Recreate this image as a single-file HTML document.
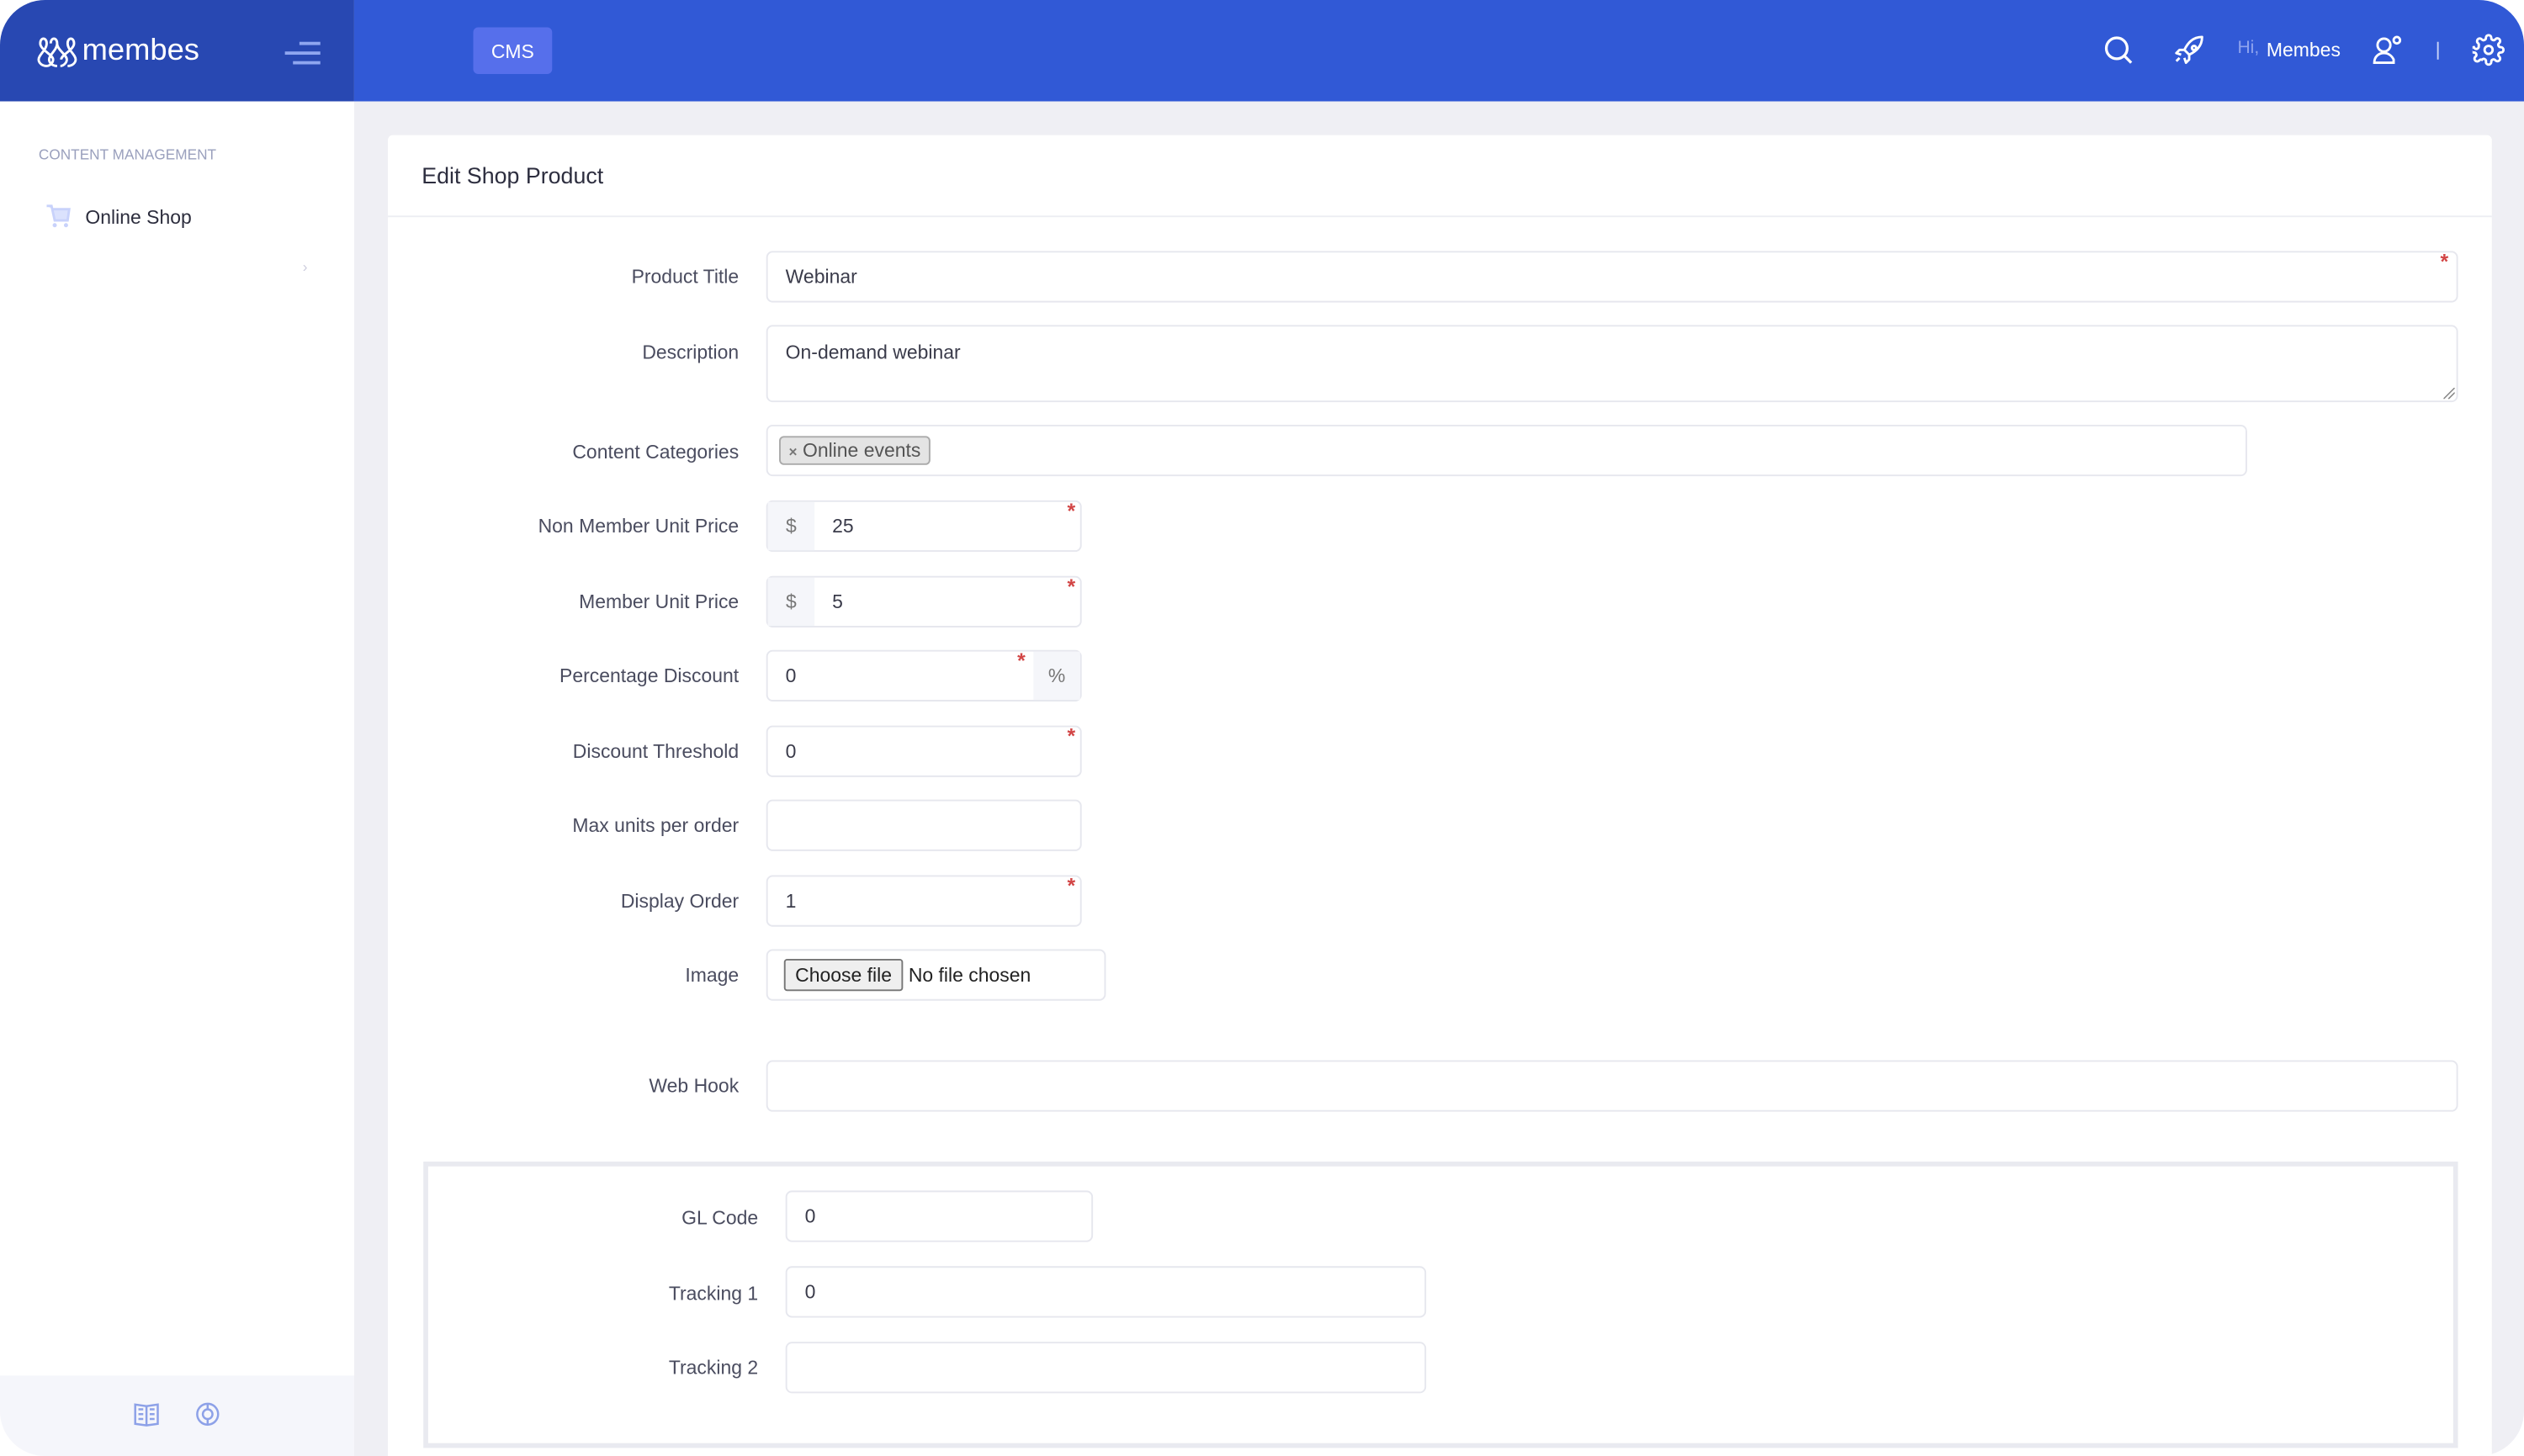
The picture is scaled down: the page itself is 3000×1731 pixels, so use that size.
<!DOCTYPE html>
<html><head><meta charset="utf-8"><style>
*{box-sizing:border-box;margin:0;padding:0}
html,body{width:3000px;height:1731px;overflow:hidden;background:#fff;font-family:"Liberation Sans",sans-serif}
#s{position:absolute;left:0;top:0;width:1568px;height:905px;transform:scale(1.91327,1.91271);transform-origin:0 0;border-radius:28px;overflow:hidden;background:#efeff4}
.a{position:absolute}
.hl{left:0;top:0;width:220px;height:63px;background:#2848b2}
.hr{left:220px;top:0;width:1348px;height:63px;background:#3159d6}
.lab{position:absolute;right:1109px;font-size:12px;color:#4a4c5f;text-align:right;white-space:nowrap}
.in{position:absolute;background:#fff;border:1px solid #e6e7ee;border-radius:4px;font-size:12px;color:#3a3b4a;padding-left:11px;display:flex;align-items:center}
.ad{position:absolute;top:0;bottom:0;background:#f5f6fa;color:#777;display:flex;align-items:center;justify-content:center;width:29px}
.st{position:absolute;color:#d24545;font-size:13px;font-weight:bold}
</style></head><body><div id="s">
<div class="a hl"></div><div class="a hr"></div>
<div class="a" style="left:22px;top:21px;color:#fff;font-size:19px;display:flex;align-items:center">
<svg width="27" height="20" viewBox="0 0 27 20" fill="none" stroke="#fff" stroke-width="1.5"><path d="M7 19c-3 0-5-2-5-4 0-3 5-6 5-10 0-2-1-3-2-3S3 3 3 5c0 4 8 7 8 10 0 2-2 4-4 4zM13.5 19c-3 0-5-2-5-4 0-3 5-6 5-10 0-2-1-3-2-3s-2 1-2 3M13.5 5c0 4 6 7 6 10 0 2-2 4-4 4M20 19c3 0 5-2 5-4 0-3-5-6-5-10 0-2 1-3 2-3s2 1 2 3c0 4-8 7-8 10"/></svg><span style="margin-left:2px">membes</span></div>
<div class="a" style="top:26px;height:2px;background:#8fa6f0;left:186px;width:13px"></div>
<div class="a" style="left:177px;top:32px;width:22px;height:2px;background:#8fa6f0"></div>
<div class="a" style="left:182px;top:38px;width:17px;height:2px;background:#8fa6f0"></div>
<div class="a" style="left:294px;top:17px;width:49px;height:29px;background:#566feb;border-radius:3px;color:#fff;font-size:12px;display:flex;align-items:center;justify-content:center">CMS</div>
<svg class="a" style="left:1306px;top:21px" width="20" height="20" viewBox="0 0 20 20" fill="none" stroke="#fff" stroke-width="1.7"><circle cx="9" cy="9" r="6.5"/><path d="M14 14l4 4"/></svg>
<svg class="a" style="left:1350px;top:21px" width="20" height="20" viewBox="0 0 20 20" fill="none" stroke="#fff" stroke-width="1.5" stroke-linejoin="round"><path d="M18 2c-6 0-9 4-11 8l3 3c4-2 8-5 8-11zM7 10H4l-2 2 3 1M10 13v3l-2 2-1-3M13 7.5a1.3 1.3 0 1 0 .01 0M4 15l-2 2"/></svg>
<div class="a" style="left:1390px;top:24px;font-size:11px;color:#8ea3ee">Hi,</div>
<div class="a" style="left:1408px;top:24px;font-size:12px;color:#fff">Membes</div>
<svg class="a" style="left:1473px;top:21px" width="22" height="20" viewBox="0 0 22 20" fill="none" stroke="#fff" stroke-width="1.5"><circle cx="8" cy="7" r="4"/><path d="M2 18c0-4 3-6 6-6s5 2 6 4v2H2z"/><circle cx="16" cy="4" r="2"/></svg>
<div class="a" style="left:1514px;top:26px;width:1px;height:11px;background:#c9d3f7"></div>
<svg class="a" style="left:1536px;top:21px" width="20" height="20" viewBox="0 0 24 24" fill="none" stroke="#fff" stroke-width="1.8"><circle cx="12" cy="12" r="3"/><path d="M19.4 15a1.7 1.7 0 0 0 .3 1.8l.1.1a2 2 0 1 1-2.8 2.8l-.1-.1a1.7 1.7 0 0 0-2.9 1.2V21a2 2 0 1 1-4 0v-.1A1.7 1.7 0 0 0 7 19.4a1.7 1.7 0 0 0-1.8.3l-.1.1a2 2 0 1 1-2.8-2.8l.1-.1A1.7 1.7 0 0 0 1.2 14H1a2 2 0 1 1 0-4h.1A1.7 1.7 0 0 0 4.6 9a1.7 1.7 0 0 0-.3-1.8l-.1-.1a2 2 0 1 1 2.8-2.8l.1.1A1.7 1.7 0 0 0 9 4.6 1.7 1.7 0 0 0 10 3V3a2 2 0 1 1 4 0v.1a1.7 1.7 0 0 0 2.9 1.2l.1-.1a2 2 0 1 1 2.8 2.8l-.1.1A1.7 1.7 0 0 0 19.4 9 1.7 1.7 0 0 0 21 10h.1a2 2 0 1 1 0 4H21a1.7 1.7 0 0 0-1.6 1z"/></svg>
<div class="a" style="left:0;top:63px;width:220px;height:842px;background:#fff"></div>
<div class="a" style="left:0;top:855px;width:220px;height:50px;background:#f5f6fb"></div>
<div class="a" style="left:24px;top:91px;font-size:9px;color:#9aa0bd">CONTENT MANAGEMENT</div>
<svg class="a" style="left:28px;top:127px" width="16" height="15" viewBox="0 0 16 15" fill="#c8d2fb"><path d="M1 1h3l2 9h8l1-7H5" stroke="#c8d2fb" stroke-width="1.5" fill="#dbe2fd"/><circle cx="6" cy="13" r="1.3"/><circle cx="13" cy="13" r="1.3"/></svg>
<div class="a" style="left:53px;top:128px;font-size:12px;color:#2c2d3d">Online Shop</div>
<div class="a" style="left:188px;top:161px;font-size:9px;color:#ccd">›</div>
<svg class="a" style="left:83px;top:871px" width="16" height="16" viewBox="0 0 16 16" fill="none" stroke="#8da1e8" stroke-width="1.3"><path d="M1 2l7 1 7-1v12l-7 1-7-1zM8 3v12M3 5h3M3 8h3M3 11h3M10 5h3M10 8h3M10 11h3"/></svg>
<svg class="a" style="left:121px;top:871px" width="16" height="16" viewBox="0 0 16 16" fill="none" stroke="#8da1e8" stroke-width="1.3"><circle cx="8" cy="8" r="6.5"/><circle cx="8" cy="8" r="3"/><path d="M8 1.5v3.5M8 11v3.5"/></svg>
<div class="a" style="left:241px;top:84px;width:1307px;height:830px;background:#fff;border-radius:3px"></div>
<div class="a" style="left:262px;top:101px;font-size:14px;color:#2d2e3f">Edit Shop Product</div>
<div class="a" style="left:241px;top:134px;width:1307px;height:1px;background:#eceef3"></div>

<div class="lab" style="top:165px">Product Title</div>
<div class="in" style="left:476px;top:156px;width:1051px;height:32px">Webinar</div><div class="st" style="left:1516px;top:155px">*</div>
<div class="lab" style="top:212px">Description</div>
<div class="in" style="left:476px;top:202px;width:1051px;height:48px;align-items:flex-start;padding-top:9px">On-demand webinar</div>
<svg class="a" style="left:1518px;top:241px" width="7" height="7" viewBox="0 0 7 7" stroke="#888" stroke-width="0.8"><path d="M7 0L0 7M7 3L3 7"/></svg>
<div class="lab" style="top:274px">Content Categories</div>
<div class="in" style="left:476px;top:264px;width:920px;height:32px;padding-left:7px"><span style="background:#e4e4e4;border:1px solid #aaa;border-radius:3px;padding:1px 5px;color:#555;font-size:12px"><b style="font-size:9px;color:#777">×</b> Online events</span></div>
<div class="lab" style="top:320px">Non Member Unit Price</div>
<div class="in" style="left:476px;top:311px;width:196px;height:32px;padding-left:40px"><div class="ad" style="left:0">$</div>25</div><div class="st" style="left:663px;top:310px">*</div>
<div class="lab" style="top:367px">Member Unit Price</div>
<div class="in" style="left:476px;top:358px;width:196px;height:32px;padding-left:40px"><div class="ad" style="left:0">$</div>5</div><div class="st" style="left:663px;top:357px">*</div>
<div class="lab" style="top:413px">Percentage Discount</div>
<div class="in" style="left:476px;top:404px;width:196px;height:32px"><div class="ad" style="right:0">%</div>0</div><div class="st" style="left:632px;top:403px">*</div>
<div class="lab" style="top:460px">Discount Threshold</div>
<div class="in" style="left:476px;top:451px;width:196px;height:32px">0</div><div class="st" style="left:663px;top:450px">*</div>
<div class="lab" style="top:506px">Max units per order</div>
<div class="in" style="left:476px;top:497px;width:196px;height:32px"></div>
<div class="lab" style="top:553px">Display Order</div>
<div class="in" style="left:476px;top:544px;width:196px;height:32px">1</div><div class="st" style="left:663px;top:543px">*</div>
<div class="lab" style="top:599px">Image</div>
<div class="in" style="left:476px;top:590px;width:211px;height:32px;padding-left:10px;color:#222"><span style="background:#efefef;border:1px solid #767676;border-radius:2px;padding:2px 6px;font-size:12px">Choose file</span>&nbsp;No file chosen</div>
<div class="lab" style="top:668px">Web Hook</div>
<div class="in" style="left:476px;top:659px;width:1051px;height:32px"></div>
<div class="a" style="left:263px;top:722px;width:1264px;height:178px;border:3px solid #e9eaf0"></div>
<div class="lab" style="top:750px;right:1097px">GL Code</div>
<div class="in" style="left:488px;top:740px;width:191px;height:32px">0</div>
<div class="lab" style="top:797px;right:1097px">Tracking 1</div>
<div class="in" style="left:488px;top:787px;width:398px;height:32px">0</div>
<div class="lab" style="top:843px;right:1097px">Tracking 2</div>
<div class="in" style="left:488px;top:834px;width:398px;height:32px"></div>
</div></body></html>
